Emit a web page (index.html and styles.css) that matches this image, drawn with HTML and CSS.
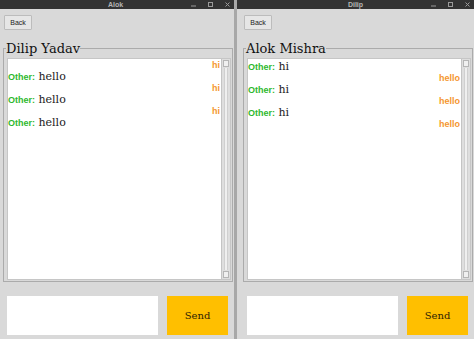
FILE: index.html
```html
<!DOCTYPE html>
<html lang="en">
<head>
  <meta charset="UTF-8">
  <meta name="viewport" content="width=device-width, initial-scale=1.0">
  <title>Chat</title>
  <link rel="stylesheet" href="styles.css">
</head>
<body>

<div class="desktop">

  <div class="window window-first">
    <div class="titlebar">
      <span class="title">Alok</span>
      <span class="controls">
        <svg width="5" height="5" viewBox="0 0 5 5"><line x1="0" y1="4" x2="5" y2="4" stroke="#9a9a9a" stroke-width="1"/></svg>
        <svg width="5" height="5" viewBox="0 0 5 5"><rect x="0.5" y="0.5" width="4" height="4" fill="none" stroke="#9a9a9a" stroke-width="1"/></svg>
        <svg width="5" height="5" viewBox="0 0 5 5"><path d="M0.5 0.5 L4.5 4.5 M4.5 0.5 L0.5 4.5" stroke="#9a9a9a" stroke-width="1"/></svg>
      </span>
    </div>
    <div class="toolbar">
      <button class="back">Back</button>
    </div>
    <fieldset class="panel">
      <legend>Dilip Yadav</legend>
      <div class="chat">
        <div class="messages">
          <p class="out">hi</p>
          <p class="in"><b>Other:</b> hello</p>
          <p class="out">hi</p>
          <p class="in"><b>Other:</b> hello</p>
          <p class="out">hi</p>
          <p class="in"><b>Other:</b> hello</p>
        </div>
        <div class="scrollbar">
          <span class="arrow"></span>
          <span class="track"></span>
          <span class="arrow"></span>
        </div>
      </div>
    </fieldset>
    <div class="compose">
      <input class="entry" type="text">
      <button class="send">Send</button>
    </div>
  </div>

  <div class="window window-second">
    <div class="titlebar">
      <span class="title">Dilip</span>
      <span class="controls">
        <svg width="5" height="5" viewBox="0 0 5 5"><line x1="0" y1="4" x2="5" y2="4" stroke="#9a9a9a" stroke-width="1"/></svg>
        <svg width="5" height="5" viewBox="0 0 5 5"><rect x="0.5" y="0.5" width="4" height="4" fill="none" stroke="#9a9a9a" stroke-width="1"/></svg>
        <svg width="5" height="5" viewBox="0 0 5 5"><path d="M0.5 0.5 L4.5 4.5 M4.5 0.5 L0.5 4.5" stroke="#9a9a9a" stroke-width="1"/></svg>
      </span>
    </div>
    <div class="toolbar">
      <button class="back">Back</button>
    </div>
    <fieldset class="panel">
      <legend>Alok Mishra</legend>
      <div class="chat">
        <div class="messages">
          <p class="in"><b>Other:</b> hi</p>
          <p class="out">hello</p>
          <p class="in"><b>Other:</b> hi</p>
          <p class="out">hello</p>
          <p class="in"><b>Other:</b> hi</p>
          <p class="out">hello</p>
        </div>
        <div class="scrollbar">
          <span class="arrow"></span>
          <span class="track"></span>
          <span class="arrow"></span>
        </div>
      </div>
    </fieldset>
    <div class="compose">
      <input class="entry" type="text">
      <button class="send">Send</button>
    </div>
  </div>

</div>

</body>
</html>
```

FILE: styles.css
```css
body {
  margin: 0;
  padding: 0;
  background-color: #d9d9d9;
  font-family: "Liberation Sans", Arial, sans-serif;
  overflow: hidden;
}
.desktop {
  display: flex;
  height: 339px;
  width: 474px;
  overflow: hidden;
}
.window {
  display: flex;
  flex-direction: column;
  width: 237px;
  flex-shrink: 0;
  background-color: #d9d9d9;
}
.window-first {
  margin-left: -3px;
}
.window-second {
  border-left: 3px solid #a8a8a8;
}
.titlebar {
  display: grid;
  grid-template-columns: 1fr auto 1fr;
  height: 9px;
  background-color: #333333;
  overflow: hidden;
}
.title {
  grid-column: 2;
  align-self: center;
  font-size: 7px;
  font-weight: bold;
  line-height: 9px;
  color: #b5b5b5;
}
.controls {
  grid-column: 3;
  justify-self: end;
  display: flex;
  align-items: flex-end;
  gap: 12px;
  padding-right: 4px;
}
.controls svg {
  display: block;
  margin-bottom: 2px;
}
.toolbar {
  padding: 6px 0 0 7px;
}
.back {
  display: block;
  width: 28px;
  height: 15px;
  padding: 0;
  font-family: "Liberation Sans", Arial, sans-serif;
  font-size: 7px;
  color: #222;
  background-color: #e6e6e6;
  border: 1px solid #bcbcbc;
  border-radius: 1px;
}
.panel {
  margin: 11px 1px 0 6px;
  padding: 2px 1px 1px 3px;
  border: 1px solid #ababab;
  min-inline-size: 0;
}
.panel legend {
  padding: 0;
  margin-left: -1px;
  font-family: "DejaVu Serif", serif;
  font-size: 13px;
  line-height: 15px;
  color: #111;
}
.chat {
  display: flex;
  height: 222px;
  background-color: white;
  border: 1px solid #c6c6c6;
  box-sizing: border-box;
}
.messages {
  flex: 1;
  padding: 1px 1px 0 0;
}
.messages p {
  margin: 0;
  white-space: nowrap;
}
.in {
  height: 13px;
  line-height: 13px;
  font-family: "DejaVu Serif", serif;
  font-size: 11px;
  color: #1a1a1a;
}
.in b {
  font-family: "Liberation Sans", Arial, sans-serif;
  font-size: 9px;
  color: #2eb82e;
}
.out {
  height: 10px;
  line-height: 10px;
  text-align: right;
  font-size: 9px;
  font-weight: bold;
  color: #f5962f;
}
.scrollbar {
  display: flex;
  flex-direction: column;
  width: 9px;
  background-color: #dedede;
  border-left: 1px solid #c4c4c4;
  box-sizing: border-box;
}
.arrow {
  height: 7px;
  margin: 1px;
  background-color: #f0f0f0;
  border: 1px solid #b5b5b5;
  box-sizing: border-box;
}
.track {
  flex: 1;
  margin: 0 2px;
  border-left: 1px solid #cfcfcf;
  border-right: 1px solid #cfcfcf;
  background-color: #efefef;
}
.compose {
  display: flex;
  gap: 9px;
  height: 39px;
  margin-top: 14px;
  padding-left: 10px;
}
.entry {
  width: 151px;
  height: 39px;
  padding: 0 4px;
  box-sizing: border-box;
  border: none;
  background-color: white;
}
.send {
  width: 61px;
  height: 39px;
  border: none;
  background-color: #ffbf00;
  font-family: "DejaVu Serif", serif;
  font-size: 10px;
  color: #2e2204;
}
```
